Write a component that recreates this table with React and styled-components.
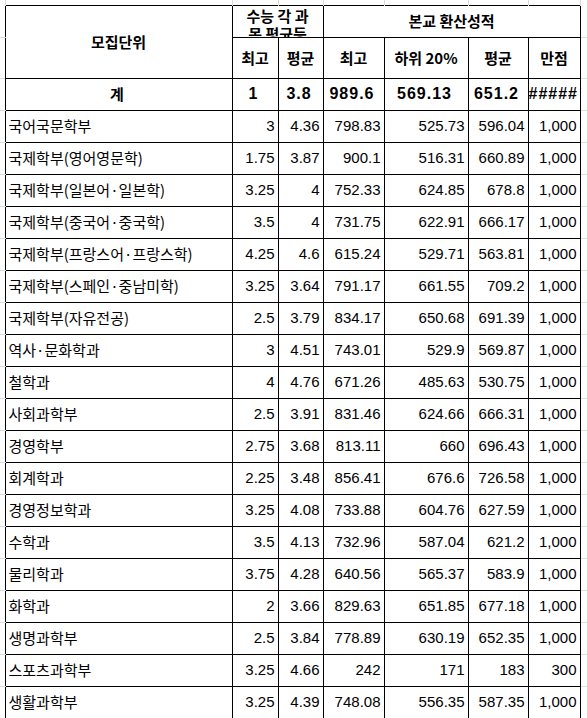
import React from "react";
import styled, { createGlobalStyle } from "styled-components";

const GlobalStyle = createGlobalStyle`
  html, body {
    margin: 0;
    padding: 0;
    background: #ffffff;
    overflow: hidden;
  }
`;

const GRID = "#d9dbdd";
const colWidths = [5, 227, 46, 45, 61, 84, 60, 52, 7];

const rows = [
  ["국어국문학부", "3", "4.36", "798.83", "525.73", "596.04", "1,000"],
  ["국제학부(영어영문학)", "1.75", "3.87", "900.1", "516.31", "660.89", "1,000"],
  ["국제학부(일본어·일본학)", "3.25", "4", "752.33", "624.85", "678.8", "1,000"],
  ["국제학부(중국어·중국학)", "3.5", "4", "731.75", "622.91", "666.17", "1,000"],
  ["국제학부(프랑스어·프랑스학)", "4.25", "4.6", "615.24", "529.71", "563.81", "1,000"],
  ["국제학부(스페인·중남미학)", "3.25", "3.64", "791.17", "661.55", "709.2", "1,000"],
  ["국제학부(자유전공)", "2.5", "3.79", "834.17", "650.68", "691.39", "1,000"],
  ["역사·문화학과", "3", "4.51", "743.01", "529.9", "569.87", "1,000"],
  ["철학과", "4", "4.76", "671.26", "485.63", "530.75", "1,000"],
  ["사회과학부", "2.5", "3.91", "831.46", "624.66", "666.31", "1,000"],
  ["경영학부", "2.75", "3.68", "813.11", "660", "696.43", "1,000"],
  ["회계학과", "2.25", "3.48", "856.41", "676.6", "726.58", "1,000"],
  ["경영정보학과", "3.25", "4.08", "733.88", "604.76", "627.59", "1,000"],
  ["수학과", "3.5", "4.13", "732.96", "587.04", "621.2", "1,000"],
  ["물리학과", "3.75", "4.28", "640.56", "565.37", "583.9", "1,000"],
  ["화학과", "2", "3.66", "829.63", "651.85", "677.18", "1,000"],
  ["생명과학부", "2.5", "3.84", "778.89", "630.19", "652.35", "1,000"],
  ["스포츠과학부", "3.25", "4.66", "242", "171", "183", "300"],
  ["생활과학부", "3.25", "4.39", "748.08", "556.35", "587.35", "1,000"],
];

const total = ["계", "1", "3.8", "989.6", "569.13", "651.2", "#####"];

const Sheet = styled.table`
  border-collapse: collapse;
  table-layout: fixed;
  width: 587px;
  font-family: "Noto Sans CJK KR", "Liberation Sans", sans-serif;
  color: #000;
`;

const Row = styled.tr`
  height: ${(p) => p.$h}px;
`;

// cells outside the printed table: only the faint sheet gridlines
const Gutter = styled.td`
  padding: 0;
  border: none;
  border-bottom: ${(p) => (p.$line ? `1px solid ${GRID}` : "none")};
  border-right: ${(p) => (p.$side ? `1px solid ${GRID}` : "none")};
`;

const Cell = styled.td`
  border: 1px solid #000;
  padding: 0 ${(p) => (p.$align === "left" ? "0 0 3px" : "3px 0 0")};
  text-align: ${(p) => p.$align || "center"};
  vertical-align: middle;
  white-space: nowrap;
  overflow: hidden;
  font-family: ${(p) =>
    p.$num ? `"Liberation Sans", "Noto Sans CJK KR", sans-serif` : `"Noto Sans CJK KR", "Liberation Sans", sans-serif`};
  font-size: ${(p) => (p.$big ? 16 : 15)}px;
  font-weight: ${(p) => (p.$bold ? 700 : 400)};
  letter-spacing: ${(p) => (p.$big ? "1px" : "0")};
  line-height: 18px;
`;

const HeadCell = styled.th`
  border: 1px solid #000;
  padding: 0;
  text-align: center;
  vertical-align: middle;
  white-space: nowrap;
  font-family: "Noto Sans CJK KR", "Liberation Sans", sans-serif;
  font-size: 15px;
  font-weight: 700;
  line-height: 18px;
`;

const Clipped = styled.div`
  height: 31px;
  overflow: hidden;
  padding-top: 1px;
  box-sizing: border-box;
`;

const LeftGutter = ({ line = true }) => <Gutter $line={line} />;

export default function App() {
  return (
    <>
      <GlobalStyle />
      <Sheet>
        <colgroup>
          {colWidths.map((w, i) => (
            <col key={i} style={{ width: w }} />
          ))}
        </colgroup>
        <tbody>
          <Row $h={5}>
            {colWidths.map((_, i) => (
              <Gutter key={i} $side={i < colWidths.length - 1} />
            ))}
          </Row>
          <Row $h={32}>
            <LeftGutter />
            <HeadCell rowSpan={2}>모집단위</HeadCell>
            <HeadCell colSpan={2} style={{ verticalAlign: "top" }}>
              <Clipped>
                수능 각 과<br />목 평균등
              </Clipped>
            </HeadCell>
            <HeadCell colSpan={4}>본교 환산성적</HeadCell>
            <LeftGutter />
          </Row>
          <Row $h={41}>
            <LeftGutter />
            <HeadCell>최고</HeadCell>
            <HeadCell>평균</HeadCell>
            <HeadCell>최고</HeadCell>
            <HeadCell>하위 20%</HeadCell>
            <HeadCell>평균</HeadCell>
            <HeadCell>만점</HeadCell>
            <LeftGutter />
          </Row>
          <Row $h={32}>
            <LeftGutter />
            {total.map((v, i) => (
              <Cell key={i} $bold $big={i > 0} $num={i > 0} $align="center">
                {v}
              </Cell>
            ))}
            <LeftGutter />
          </Row>
          {rows.map((r, ri) => (
            <Row key={ri} $h={32}>
              <LeftGutter />
              {r.map((v, i) => (
                <Cell key={i} $num={i > 0} $align={i === 0 ? "left" : "right"}>
                  {v}
                </Cell>
              ))}
              <LeftGutter />
            </Row>
          ))}
        </tbody>
      </Sheet>
    </>
  );
}
